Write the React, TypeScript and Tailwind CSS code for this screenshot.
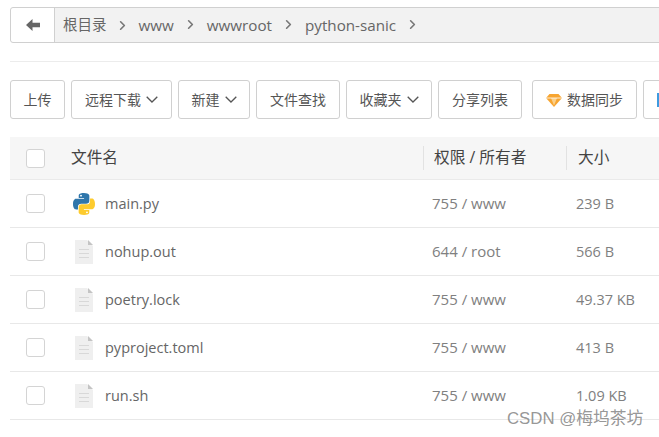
import { ChevronRight } from "lucide-react";

const font = { fontFamily: '"Open Sans","Noto Sans CJK SC",sans-serif' };

const crumbs = ["根目录", "www", "wwwroot", "python-sanic"];
const files = [
  { name: "main.py", perm: "755 / www", size: "239 B", py: true },
  { name: "nohup.out", perm: "644 / root", size: "566 B" },
  { name: "poetry.lock", perm: "755 / www", size: "49.37 KB" },
  { name: "pyproject.toml", perm: "755 / www", size: "413 B" },
  { name: "run.sh", perm: "755 / www", size: "1.09 KB" },
];

function Btn({ w, label, arrow, gem }: { w: string; label: string; arrow?: boolean; gem?: boolean }) {
  return (
    <div className={`${w} h-[39px] shrink-0 flex items-center justify-center gap-[5px] rounded-[3px] border border-[#d0d0d0] bg-white text-[14px] text-[#555]`}>
      {gem && (
        <svg width="16" height="14" viewBox="0 0 16 14">
          <path d="M3.5 1h9L16 5 8 14 0 5z" fill="#f7a531" />
          <path d="M5 5h6L8 12.5z" fill="#fbd08a" />
          <path d="M0 5h16" stroke="#fff" strokeWidth="0.8" />
        </svg>
      )}
      <span>{label}</span>
      {arrow && (
        <svg width="12" height="7" viewBox="0 0 12 7" fill="none">
          <path d="M0.7 0.7L6 6L11.3 0.7" stroke="#555" strokeWidth="1.3" />
        </svg>
      )}
    </div>
  );
}

function Check() {
  return <div className="w-[19px] h-[19px] rounded-[3px] border border-[#d4d4d4] bg-white" />;
}

function PyIcon() {
  return (
    <svg width="22" height="22" viewBox="0 0 110 110">
      <path
        fill="#2f76ab"
        d="M54.9 0C26.8 0 28.6 12.2 28.6 12.2l0 12.6h26.8v3.8H17.9S0 26.6 0 54.9c0 28.3 15.6 27.3 15.6 27.3h9.3V69.1s-.5-15.6 15.4-15.6h26.5s14.9.2 14.9-14.4V14.9S84 0 54.9 0zM40.1 8.5a4.8 4.8 0 1 1 0 9.6 4.8 4.8 0 0 1 0-9.6z"
      />
      <path
        fill="#fdcb2e"
        transform="rotate(180 55 55)"
        d="M54.9 0C26.8 0 28.6 12.2 28.6 12.2l0 12.6h26.8v3.8H17.9S0 26.6 0 54.9c0 28.3 15.6 27.3 15.6 27.3h9.3V69.1s-.5-15.6 15.4-15.6h26.5s14.9.2 14.9-14.4V14.9S84 0 54.9 0zM40.1 8.5a4.8 4.8 0 1 1 0 9.6 4.8 4.8 0 0 1 0-9.6z"
      />
    </svg>
  );
}

function FileIcon() {
  return (
    <svg width="18" height="24" viewBox="0 0 18 24">
      <path d="M0 0h12l6 6v18H0z" fill="#efefef" />
      <path d="M13 0l5 5h-5z" fill="#c4c4c4" />
      <path d="M4 9.5h10M4 13.5h10M4 17.5h10" stroke="#d8d8d8" strokeWidth="1.2" />
    </svg>
  );
}

export default function App() {
  return (
    <div className="relative w-[659px] h-[437px] overflow-hidden bg-white pl-[10px] pt-[7px]" style={font}>
      <div className="w-[680px] h-[36px] flex rounded-[3px] border border-[#d0d0d0] bg-[#f2f2f2]">
        <div className="w-[44px] shrink-0 flex items-center justify-center bg-white border-r border-[#d0d0d0] rounded-l-[3px]">
          <svg width="14" height="12" viewBox="0 0 14 12">
            <path d="M6.5 0v3.8H14v4.4H6.5V12L0 6z" fill="#666" />
          </svg>
        </div>
        <div className="flex items-center pl-2 text-[15.2px] text-[#666]">
          {crumbs.map((c, i) => (
            <div key={c} className="flex items-center">
              <span className={i === 0 ? "text-[14.5px] mr-[-1px]" : ""}>{c}</span>
              <ChevronRight size={15} strokeWidth={2.6} className="mx-[9px] text-[#777]" />
            </div>
          ))}
        </div>
      </div>

      <div className="mt-[18px] h-px w-[660px] bg-[#ececec]" />

      <div className="mt-[18px] flex w-[720px]">
        <Btn w="w-[55px]" label="上传" />
        <div className="w-[6px] shrink-0" />
        <Btn w="w-[101px]" label="远程下载" arrow />
        <div className="w-[6px] shrink-0" />
        <Btn w="w-[72px]" label="新建" arrow />
        <div className="w-[6px] shrink-0" />
        <Btn w="w-[84px]" label="文件查找" />
        <div className="w-[6px] shrink-0" />
        <Btn w="w-[86px]" label="收藏夹" arrow />
        <div className="w-[6px] shrink-0" />
        <Btn w="w-[84px]" label="分享列表" />
        <div className="w-[10px] shrink-0" />
        <Btn w="w-[105px]" label="数据同步" gem />
        <div className="w-[6px] shrink-0" />
        <div className="w-[60px] h-[39px] shrink-0 rounded-[3px] border border-[#d0d0d0] pl-[13px] pt-[12px]">
          <div className="w-[4px] h-[14px] bg-[#3d9be0]" />
        </div>
      </div>

      <div className="mt-[18px] w-[660px]">
        <div className="h-[43px] grid grid-cols-[61px_352px_143px_1fr] items-center bg-[#f6f6f6] border-b border-[#eaeaea] text-[15.7px] text-[#444]">
          <div className="pl-4"><Check /></div>
          <div>文件名</div>
          <div className="h-[24px] border-l border-[#e2e2e2] pl-[10px] flex items-center">权限 / 所有者</div>
          <div className="h-[24px] border-l border-[#e2e2e2] pl-[11px] flex items-center">大小</div>
        </div>
        {files.map((f) => (
          <div key={f.name} className="h-[48px] grid grid-cols-[61px_361px_144px_1fr] items-center border-b border-[#e8e8e8] text-[14.5px] text-[#808080]">
            <div className="pl-4"><Check /></div>
            <div className="flex items-center">
              <div className="w-[34px] flex justify-center pr-[9px]">{f.py ? <PyIcon /> : <FileIcon />}</div>
              <span className="text-[#666]">{f.name}</span>
            </div>
            <div className="text-[15px]">{f.perm}</div>
            <div>{f.size}</div>
          </div>
        ))}
      </div>

      <div className="absolute left-[507px] top-[408px] text-[16.8px] leading-[22px] text-[#8a8a8a]/90" style={{ fontFamily: '"Liberation Sans","Noto Sans CJK SC",sans-serif' }}>
        CSDN @梅坞茶坊
      </div>
    </div>
  );
}
